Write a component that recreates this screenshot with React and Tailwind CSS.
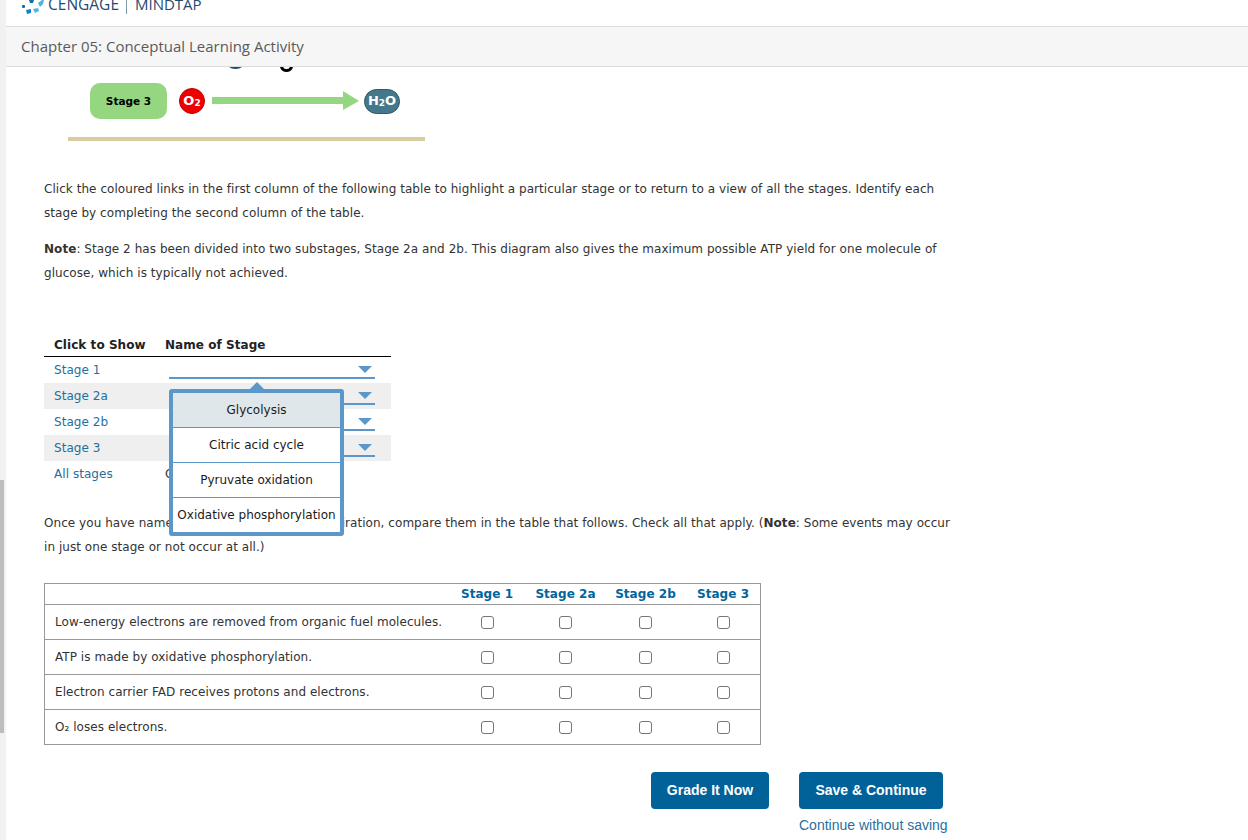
const verdana = { fontFamily: '"DejaVu Sans", sans-serif' };

const stages = ['Stage 1', 'Stage 2a', 'Stage 2b', 'Stage 3'];
const options = ['Glycolysis', 'Citric acid cycle', 'Pyruvate oxidation', 'Oxidative phosphorylation'];
const events = [
  'Low-energy electrons are removed from organic fuel molecules.',
  'ATP is made by oxidative phosphorylation.',
  'Electron carrier FAD receives protons and electrons.',
  'O₂ loses electrons.',
];

function Logo() {
  return (
    <svg width="23" height="15" viewBox="0 0 23 15" className="shrink-0">
      <path d="M17 3l4-3h2l-1 4-3 3z" fill="#4db4e6" />
      <path d="M8 0h5l-1 3H9z" fill="#0f6fa8" />
      <rect x="1" y="5" width="3" height="3" rx="1" fill="#0f6fa8" />
      <path d="M5 10l5-1v4l-4 1z" fill="#1583c2" />
      <path d="M12 9l5-1 1 3-4 2z" fill="#4db4e6" />
    </svg>
  );
}

function Dropdown() {
  return (
    <div className="-mt-[4px] flex h-[22px] w-[206px] justify-end border-b-2 border-[#5b97c9] pt-[9px] pr-[3px]">
      <div className="h-0 w-0 border-x-[7.5px] border-t-[7px] border-x-transparent border-t-[#5b97c9]" />
    </div>
  );
}

function Popup() {
  return (
    <div className="absolute top-[389px] left-[169px] z-10 w-[175px]">
      <div className="absolute -top-[7px] left-[80px] h-0 w-0 border-x-[8px] border-b-[8px] border-x-transparent border-b-[#5b97c9]" />
      <div className="rounded-[3px] border-4 border-[#5b97c9] bg-white">
        {options.map((o, i) => (
          <div
            key={o}
            className={`flex items-center justify-center whitespace-nowrap text-[12px] text-[#1a1a1a] ${i === 0 ? 'h-[34px] bg-[#dfe7ea]' : 'h-[35px] border-t border-[#5b97c9]'}`}
          >
            {o}
          </div>
        ))}
      </div>
    </div>
  );
}

function Checkbox() {
  return <div className="mx-auto h-[13px] w-[13px] rounded-[3px] border border-[#767676] bg-white" />;
}

export default function App() {
  return (
    <div className="flex h-[840px] w-[1248px] overflow-hidden bg-white" style={verdana}>
      <div className="flex w-[6px] shrink-0 flex-col bg-[#f1f1f1] pt-[480px]">
        <div className="h-[253px] w-[4px] bg-[#bdbdbd]" />
      </div>

      <div className="relative min-w-0 flex-1">
        <div className="flex h-[27px] items-start overflow-hidden border-b border-[#dcdcdc] pl-[15px]">
          <div className="flex items-start" style={{ fontFamily: '"Open Sans", sans-serif' }}>
            <Logo />
            <span className="-mt-[6px] ml-[4px] text-[15.5px] leading-[20px] text-[#1f4a70]">CENGAGE</span>
            <span className="mr-[8px] ml-[7px] h-[14px] w-px bg-[#7f98ad]" />
            <span className="-mt-[6px] text-[15px] leading-[20px] text-[#1f4a70]">MINDTAP</span>
          </div>
        </div>

        <div
          className="flex h-[40px] items-center border-b border-[#dcdcdc] bg-[#f6f6f6] pl-[15px] text-[15px] text-[#5a5a5a]"
          style={{ fontFamily: '"Open Sans", sans-serif' }}
        >
          Chapter 05: Conceptual Learning Activity
        </div>

        <div className="relative">
          <div className="flex h-[5px] overflow-hidden pl-[219px]">
            <div className="-mt-[18px] h-[20px] w-[21px] rounded-full bg-[#1f4f78]" />
            <div className="ml-[34px] -mt-[7px] h-[12px] w-[13px] rounded-full border-[3px] border-black bg-white" />
          </div>

          <div className="flex items-center pt-[11px] pl-[84px]">
            <div className="flex h-[36px] w-[77px] items-center justify-center rounded-[10px] bg-[#95d681] pt-[1px] text-[10.5px] font-bold text-black">
              Stage 3
            </div>
            <div className="ml-[12px] flex h-[26px] w-[26px] items-center justify-center rounded-full border border-[#b00] bg-[#ee0000] text-[13px] font-bold text-white">
              O<sub className="text-[9px]">2</sub>
            </div>
            <svg width="148" height="20" viewBox="0 0 148 20" className="ml-[7px]">
              <path d="M0 6h131V0l16 10-16 9v-6H0z" fill="#95d681" />
            </svg>
            <div className="ml-[4px] flex h-[25px] w-[36px] items-center justify-center rounded-full border border-[#2e5a68] bg-[#44788a] text-[13px] font-bold text-white">
              H<sub className="text-[9px]">2</sub>O
            </div>
          </div>

          <div className="mt-[18px] ml-[62px] h-[4px] w-[357px] bg-[#d9cc9f]" />

          <div className="w-[945px] pt-[36px] pl-[38px] text-[12px] leading-[24px] tracking-[0.05px] text-[#333]">
            <p>
              Click the coloured links in the first column of the following table to highlight a particular stage or to return to a view of all the stages. Identify each stage by completing the second column of the table.
            </p>
            <p className="mt-[12px]">
              <b>Note</b>: Stage 2 has been divided into two substages, Stage 2a and 2b. This diagram also gives the maximum possible ATP yield for one molecule of glucose, which is typically not achieved.
            </p>
          </div>

          <div className="mt-[48px] ml-[38px] w-[347px] text-[12px] tracking-[0.05px]">
            <div className="flex h-[24px] items-center border-b border-black pl-[10px] text-[12px] font-bold text-[#222]">
              <span className="w-[111px]">Click to Show</span>
              <span>Name of Stage</span>
            </div>
            {stages.map((s, i) => (
              <div key={s} className={`flex h-[26px] items-center pl-[10px] text-[#1f6e9f] ${i % 2 === 1 ? 'bg-[#efefef]' : ''}`}>
                <span className="w-[115px]">{s}</span>
                <Dropdown />
              </div>
            ))}
            <div className="flex h-[26px] items-center pl-[10px] text-[#1f6e9f]">
              <span className="w-[111px]">All stages</span>
              <span className="text-[#333]">Overview</span>
            </div>
          </div>

          <p className="mt-[24px] w-[945px] pl-[38px] text-[12px] leading-[24px] tracking-[0.05px] text-[#333]">
            Once you have named the stages of cellular respiration, compare them in the table that follows. Check all that apply. (<b>Note</b>: Some events may occur in just one stage or not occur at all.)
          </p>

          <div className="mt-[24px] ml-[38px] w-[717px] border border-[#999] text-[12px] tracking-[0.05px] text-[#333]">
            <div className="grid h-[20px] grid-cols-[403px_78px_79px_81px_74px] items-center text-center text-[12px] font-bold text-[#00659c]">
              <span />
              {stages.map((s) => (
                <span key={s}>{s}</span>
              ))}
            </div>
            {events.map((e) => (
              <div key={e} className="grid h-[35px] grid-cols-[403px_78px_79px_81px_74px] items-center border-t border-[#999]">
                <span className="pl-[10px] whitespace-nowrap">{e}</span>
                <Checkbox />
                <Checkbox />
                <Checkbox />
                <Checkbox />
              </div>
            ))}
          </div>

          <div className="mt-[27px] ml-[645px] flex gap-[30px]" style={{ fontFamily: '"Liberation Sans", sans-serif' }}>
            <button className="h-[37px] w-[118px] rounded-[4px] bg-[#006298] text-[14px] font-bold text-white">Grade It Now</button>
            <div className="flex flex-col">
              <button className="h-[37px] w-[144px] rounded-[4px] bg-[#006298] text-[14px] font-bold text-white">Save &amp; Continue</button>
              <a className="mt-[8px] text-[14px] leading-[16px] whitespace-nowrap text-[#2a6f9f]">Continue without saving</a>
            </div>
          </div>
        </div>
      </div>

      <Popup />
    </div>
  );
}
